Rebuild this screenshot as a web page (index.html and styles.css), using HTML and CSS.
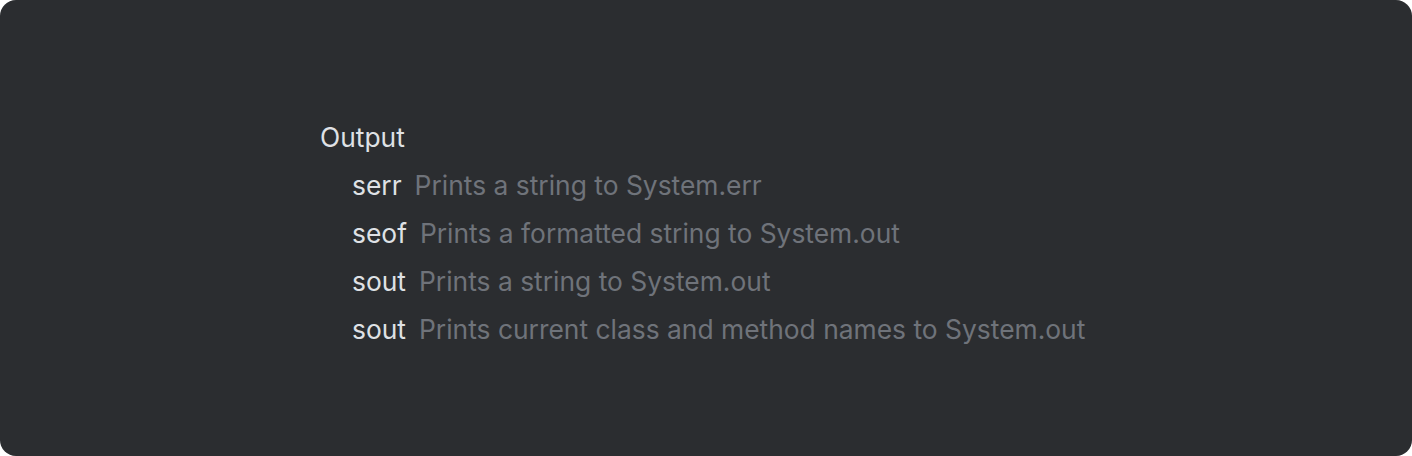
FILE: index.html
```html
<!DOCTYPE html>
<html>
<head>
<meta charset="utf-8">
<link rel="stylesheet" href="styles.css">
</head>
<body>
<div class="panel">
  <div class="group">
    <div class="title">Output</div>
    <div class="row"><span class="key">serr</span><span class="desc">Prints a string to System.err</span></div>
    <div class="row"><span class="key">seof</span><span class="desc">Prints a formatted string to System.out</span></div>
    <div class="row"><span class="key">sout</span><span class="desc">Prints a string to System.out</span></div>
    <div class="row"><span class="key">sout</span><span class="desc">Prints current class and method names to System.out</span></div>
  </div>
</div>
</body>
</html>
```
FILE: styles.css
```css
html, body {
  margin: 0;
  padding: 0;
  background: #ffffff;
}
.panel {
  width: 1412px;
  height: 456px;
  box-sizing: border-box;
  background: #2b2d30;
  border-radius: 16px;
  padding: 113px 0 0 320px;
  font-family: Inter, "Noto Sans", sans-serif;
  font-size: 26.4px;
}
.group {
  display: flex;
  flex-direction: column;
}
.title {
  height: 48px;
  line-height: 48px;
  color: #dfe1e5;
}
.row {
  display: flex;
  gap: 13px;
  height: 48px;
  line-height: 48px;
  padding-left: 32px;
}
.key {
  color: #dfe1e5;
}
.desc {
  color: #6f737a;
}
```
